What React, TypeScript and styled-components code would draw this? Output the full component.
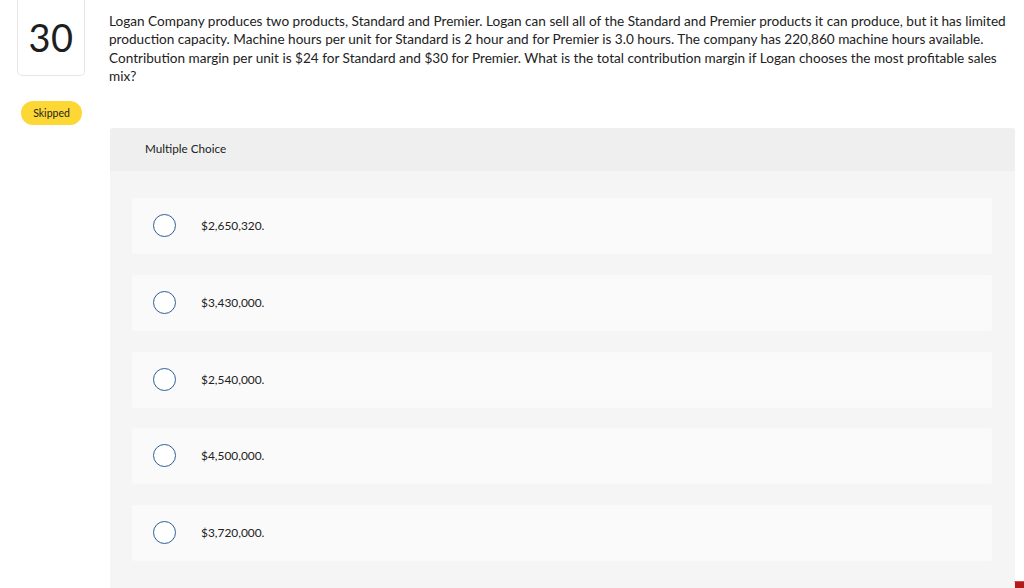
import React from "react";
import styled, { createGlobalStyle } from "styled-components";

const Global = createGlobalStyle`
  html, body { margin: 0; padding: 0; background: #fff; }
  body { font-family: Lato, "Open Sans", Arial, sans-serif; color: #222; overflow: hidden; }
  #root { width: 1024px; height: 588px; }
`;

const Page = styled.div`
  position: relative;
  display: flex;
  width: 1024px;
  height: 588px;
  overflow: hidden;
`;

const Side = styled.div`
  width: 93px;
  padding-left: 17px;
  display: flex;
  flex-direction: column;
  align-items: flex-start;
`;

const NumberBox = styled.div`
  width: 66px;
  height: 76px;
  margin-top: -1px;
  border: 1px solid #e6e6e6;
  border-top: none;
  border-radius: 0 0 5px 5px;
  display: flex;
  align-items: center;
  justify-content: center;
  font-size: 38px;
  color: #1e1e1e;
  letter-spacing: 0.5px;
`;

const Badge = styled.div`
  margin-top: 25px;
  margin-left: 4px;
  width: 61px;
  height: 24px;
  border-radius: 12px;
  background: #fdd835;
  display: flex;
  align-items: center;
  justify-content: center;
  font-size: 10.5px;
  color: #222;
`;

const Main = styled.div`
  flex: 1;
  padding-right: 9px;
  display: flex;
  flex-direction: column;
`;

const Question = styled.p`
  margin: 12px 0 0 -1px;
  width: 905px;
  font-size: 13.6px;
  line-height: 18.3px;
  color: #222;
`;

const Panel = styled.div`
  margin-top: 43px;
  flex: 1;
  background: #f5f5f5;
  border-radius: 3px 3px 0 0;
  display: flex;
  flex-direction: column;
`;

const PanelHeader = styled.div`
  height: 43px;
  box-sizing: border-box;
  padding: 0 0 3px 35px;
  background: #efefef;
  border-radius: 3px 3px 0 0;
  display: flex;
  align-items: center;
  font-size: 11.7px;
  color: #222;
`;

const Options = styled.div`
  padding: 27px 23px 0 22px;
  display: flex;
  flex-direction: column;
  gap: 20.75px;
`;

const Option = styled.div`
  height: 56px;
  box-sizing: border-box;
  padding: 0 0 1px 21px;
  background: #fafafa;
  border-radius: 3px;
  display: flex;
  align-items: center;
  gap: 25px;
  font-size: 11.9px;
  color: #222;
`;

const Radio = styled.span`
  width: 21px;
  height: 21px;
  border-radius: 50%;
  border: 1.5px solid #2c5f97;
  background: #fff;
  flex-shrink: 0;
`;

const CornerMark = styled.div`
  position: absolute;
  right: 0;
  bottom: 0;
  width: 9px;
  height: 6px;
  background: #b31b1b;
  border-top: 1px solid #d44;
  border-left: 1px solid #eee;
`;

const choices = ["$2,650,320.", "$3,430,000.", "$2,540,000.", "$4,500,000.", "$3,720,000."];

export default function App() {
  return (
    <Page>
      <Global />
      <Side>
        <NumberBox>30</NumberBox>
        <Badge>Skipped</Badge>
      </Side>
      <Main>
        <Question>
          Logan Company produces two products, Standard and Premier. Logan can sell all of the Standard and Premier products it can produce, but it has limited production capacity. Machine hours per unit for Standard is 2 hour and for Premier is 3.0 hours. The company has 220,860 machine hours available. Contribution margin per unit is $24 for Standard and $30 for Premier. What is the total contribution margin if Logan chooses the most profitable sales mix?
        </Question>
        <Panel>
          <PanelHeader>Multiple Choice</PanelHeader>
          <Options>
            {choices.map((c) => (
              <Option key={c}>
                <Radio />
                {c}
              </Option>
            ))}
          </Options>
        </Panel>
      </Main>
      <CornerMark />
    </Page>
  );
}
